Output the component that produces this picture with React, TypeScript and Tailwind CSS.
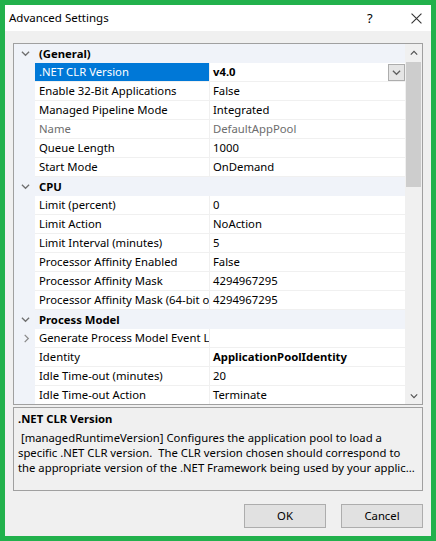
import { ReactNode } from 'react';

type Prop = {
  name: string;
  value?: string;
  bold?: boolean;
  disabled?: boolean;
  selected?: boolean;
  expandable?: boolean;
  dropdown?: boolean;
};

type Category = { title: string; props: Prop[] };

const categories: Category[] = [
  {
    title: '(General)',
    props: [
      { name: '.NET CLR Version', value: 'v4.0', bold: true, selected: true, dropdown: true },
      { name: 'Enable 32-Bit Applications', value: 'False' },
      { name: 'Managed Pipeline Mode', value: 'Integrated' },
      { name: 'Name', value: 'DefaultAppPool', disabled: true },
      { name: 'Queue Length', value: '1000' },
      { name: 'Start Mode', value: 'OnDemand' },
    ],
  },
  {
    title: 'CPU',
    props: [
      { name: 'Limit (percent)', value: '0' },
      { name: 'Limit Action', value: 'NoAction' },
      { name: 'Limit Interval (minutes)', value: '5' },
      { name: 'Processor Affinity Enabled', value: 'False' },
      { name: 'Processor Affinity Mask', value: '4294967295' },
      { name: 'Processor Affinity Mask (64-bit option)', value: '4294967295' },
    ],
  },
  {
    title: 'Process Model',
    props: [
      { name: 'Generate Process Model Event Log Entry', expandable: true },
      { name: 'Identity', value: 'ApplicationPoolIdentity', bold: true },
      { name: 'Idle Time-out (minutes)', value: '20' },
      { name: 'Idle Time-out Action', value: 'Terminate' },
    ],
  },
];

function Chevron({ dir, className }: { dir: 'down' | 'up' | 'right'; className?: string }) {
  const d =
    dir === 'down' ? 'M1 3l4 4 4-4' : dir === 'up' ? 'M1 7l4-4 4 4' : 'M3 1l4 4-4 4';
  return (
    <svg viewBox="0 0 10 10" className={className} fill="none" stroke="currentColor" strokeWidth={1.4}>
      <path d={d} />
    </svg>
  );
}

function CategoryRow({ title }: { title: string }) {
  return (
    <div className="flex h-[19px] items-center bg-[#f0f3f9]">
      <div className="flex w-[21px] justify-center pl-[2px]">
        <Chevron dir="down" className="h-[9px] w-[9px] text-[#707070]" />
      </div>
      <span className="pl-[4px] font-bold">{title}</span>
    </div>
  );
}

function PropRow({ p }: { p: Prop }) {
  const nameCls = p.selected
    ? 'bg-[#0078d7] text-white'
    : p.disabled
      ? 'text-[#6d6d6d]'
      : 'text-black';
  return (
    <div className="flex h-[19px]">
      <div className="flex w-[21px] items-center justify-center bg-[#f0f3f9] pl-[3px]">
        {p.expandable && <Chevron dir="right" className="h-[9px] w-[9px] text-[#8a8a8a]" />}
      </div>
      <div className={`flex w-[174px] items-center overflow-hidden whitespace-nowrap border-b border-[#f0f0f0] pl-[4px] ${nameCls}`}>
        {p.name}
      </div>
      <div className="relative flex flex-1 items-center overflow-hidden whitespace-nowrap border-b border-l border-[#f0f0f0] pl-[3px]">
        <span className={`${p.bold ? 'font-bold' : ''} ${p.disabled ? 'text-[#6d6d6d]' : 'text-black'}`}>
          {p.value}
        </span>
        {p.dropdown && (
          <div className="absolute right-0 top-[1px] flex h-[17px] w-[17px] items-center justify-center border border-[#adadad] bg-[#e5e5e5]">
            <Chevron dir="down" className="h-[9px] w-[9px] text-[#606060]" />
          </div>
        )}
      </div>
    </div>
  );
}

function Button({ children }: { children: ReactNode }) {
  return (
    <button className="flex h-[24px] w-[82px] items-center justify-center border border-[#adadad] bg-[#e1e1e1] text-black">
      {children}
    </button>
  );
}

export default function App() {
  return (
    <div
      className="h-[541px] w-[436px] bg-[#22b14c] p-[5px] text-[11.3px] leading-none text-black"
      style={{ fontFamily: '"Noto Sans", "Segoe UI", sans-serif' }}
    >
      <div className="flex h-full flex-col bg-[#f0f0f0]">
        {/* title bar */}
        <div className="flex h-[26px] items-center bg-white pl-[4px]">
          <span className="flex-1 text-[11.5px]">Advanced Settings</span>
          <span className="w-[20px] text-[13px]">?</span>
          <span className="ml-[22px] mr-[8px] flex w-[14px] items-center justify-center">
            <svg viewBox="0 0 10 10" className="h-[11px] w-[11px]" stroke="#333" strokeWidth={1}>
              <path d="M0.5 0.5l9 9M9.5 0.5l-9 9" />
            </svg>
          </span>
        </div>

        <div className="flex flex-1 flex-col px-[8px] pt-[12px]">
          {/* property grid */}
          <div className="flex h-[362px] w-[410px] border border-[#a0a0a0] bg-white">
            <div className="h-[360px] flex-1 overflow-hidden">
              {categories.map((c) => (
                <div key={c.title}>
                  <CategoryRow title={c.title} />
                  {c.props.map((p) => (
                    <PropRow key={p.name} p={p} />
                  ))}
                </div>
              ))}
            </div>
            {/* scrollbar */}
            <div className="flex w-[17px] flex-col bg-[#f0f0f0]">
              <div className="flex h-[17px] items-center justify-center">
                <Chevron dir="up" className="h-[8px] w-[8px] text-[#505050]" />
              </div>
              <div className="mx-[1px] mt-[1px] h-[125px] bg-[#cdcdcd]" />
              <div className="flex-1" />
              <div className="flex h-[17px] items-center justify-center">
                <Chevron dir="down" className="h-[8px] w-[8px] text-[#505050]" />
              </div>
            </div>
          </div>

          {/* description */}
          <div className="mt-[2px] h-[84px] w-[410px] overflow-hidden border border-[#a0a0a0] pl-[4px] pt-[3px] leading-[15px]">
            <div className="font-bold">.NET CLR Version</div>
            <div className="mt-[4px] whitespace-pre">{' [managedRuntimeVersion] Configures the application pool to load a'}</div>
            <div className="whitespace-pre">{'specific .NET CLR version.  The CLR version chosen should correspond to'}</div>
            <div className="whitespace-pre">{'the appropriate version of the .NET Framework being used by your applic...'}</div>
          </div>

          {/* buttons */}
          <div className="mt-[13px] flex w-[410px] justify-end gap-[15px]">
            <Button>OK</Button>
            <Button>Cancel</Button>
          </div>
        </div>
      </div>
    </div>
  );
}
